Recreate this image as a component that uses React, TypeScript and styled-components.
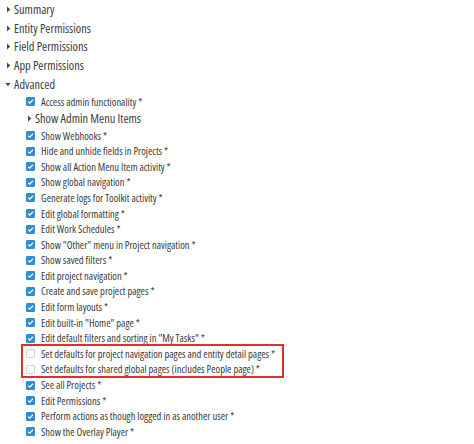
import React from 'react';
import styled, { createGlobalStyle } from 'styled-components';

const GlobalStyle = createGlobalStyle`
	html, body {
		margin: 0;
		padding: 0;
		background: #ffffff;
	}
	body {
		font-family: "Open Sans", "Roboto", sans-serif;
		font-stretch: 75%;
		color: #3a3a3a;
		-webkit-font-smoothing: antialiased;
	}
`;

const Tree = styled.div`
	display: flex;
	flex-direction: column;
	width: 474px;
`;

const Header = styled.div<{ $indent?: number; $height?: number }>`
	display: flex;
	align-items: center;
	height: ${(p) => p.$height ?? 18.75}px;
	padding-left: ${(p) => p.$indent ?? 5}px;
	font-size: 12.3px;
	color: #3c3c3c;
	white-space: nowrap;
`;

const CaretBox = styled.span`
	display: inline-flex;
	align-items: center;
	justify-content: center;
	width: 6px;
	margin-right: 3px;
`;

const ItemList = styled.div`
	display: flex;
	flex-direction: column;
	padding-left: 26px;
`;

const Row = styled.div`
	display: flex;
	align-items: center;
	gap: 6px;
	height: 15.6px;
	font-size: 10.5px;
	color: #3a3a3a;
	white-space: nowrap;
`;

const Box = styled.span<{ $checked: boolean }>`
	display: inline-flex;
	align-items: center;
	justify-content: center;
	box-sizing: border-box;
	width: 9px;
	height: 9px;
	border-radius: 1px;
	background: ${(p) => (p.$checked ? '#2f8dd3' : '#ffffff')};
	border: 1px solid ${(p) => (p.$checked ? '#2f8dd3' : '#d4d4d4')};
`;

const Highlight = styled.div`
	position: relative;
	display: flex;
	flex-direction: column;
`;

const Annotation = styled.div`
	position: absolute;
	left: -5px;
	top: -2px;
	width: 263px;
	height: 34px;
	box-sizing: border-box;
	border: 2px solid #dc3128;
	pointer-events: none;
`;

function Caret({ open }: { open?: boolean }) {
	return (
		<CaretBox>
			{open ? (
				<svg width="6" height="5" viewBox="0 0 6 5">
					<path d="M0.3 1 L5.7 1 L3 4.2 Z" fill="#4a4a4a" />
				</svg>
			) : (
				<svg width="5" height="7" viewBox="0 0 5 7">
					<path d="M1 0.6 L4.3 3.5 L1 6.4 Z" fill="#4a4a4a" />
				</svg>
			)}
		</CaretBox>
	);
}

function CheckItem({ label, checked = true }: { label: string; checked?: boolean }) {
	return (
		<Row>
			<Box $checked={checked}>
				{checked && (
					<svg width="7" height="7" viewBox="0 0 7 7">
						<path d="M1.2 3.6 L2.8 5.1 L5.9 1.8" stroke="#ffffff" strokeWidth="1.3" fill="none" />
					</svg>
				)}
			</Box>
			<span>{label}</span>
		</Row>
	);
}

const sections = ['Summary', 'Entity Permissions', 'Field Permissions', 'App Permissions'];

const before = [
	'Show Webhooks *',
	'Hide and unhide fields in Projects *',
	'Show all Action Menu Item activity *',
	'Show global navigation *',
	'Generate logs for Toolkit activity *',
	'Edit global formatting *',
	'Edit Work Schedules *',
	'Show "Other" menu in Project navigation *',
	'Show saved filters *',
	'Edit project navigation *',
	'Create and save project pages *',
	'Edit form layouts *',
	'Edit built-in "Home" page *',
	'Edit default filters and sorting in "My Tasks" *',
];

const flagged = [
	'Set defaults for project navigation pages and entity detail pages *',
	'Set defaults for shared global pages (includes People page) *',
];

const after = [
	'See all Projects *',
	'Edit Permissions *',
	'Perform actions as though logged in as another user *',
	'Show the Overlay Player *',
];

export default function App() {
	return (
		<>
			<GlobalStyle />
			<Tree>
				{sections.map((s) => (
					<Header key={s}>
						<Caret />
						{s}
					</Header>
				))}
				<Header>
					<Caret open />
					Advanced
				</Header>
				<ItemList>
					<CheckItem label="Access admin functionality *" />
					<Header $indent={0} $height={18.4}>
						<Caret />
						Show Admin Menu Items
					</Header>
					{before.map((l) => (
						<CheckItem key={l} label={l} />
					))}
					<Highlight>
						{flagged.map((l) => (
							<CheckItem key={l} label={l} checked={false} />
						))}
						<Annotation />
					</Highlight>
					{after.map((l) => (
						<CheckItem key={l} label={l} />
					))}
				</ItemList>
			</Tree>
		</>
	);
}
